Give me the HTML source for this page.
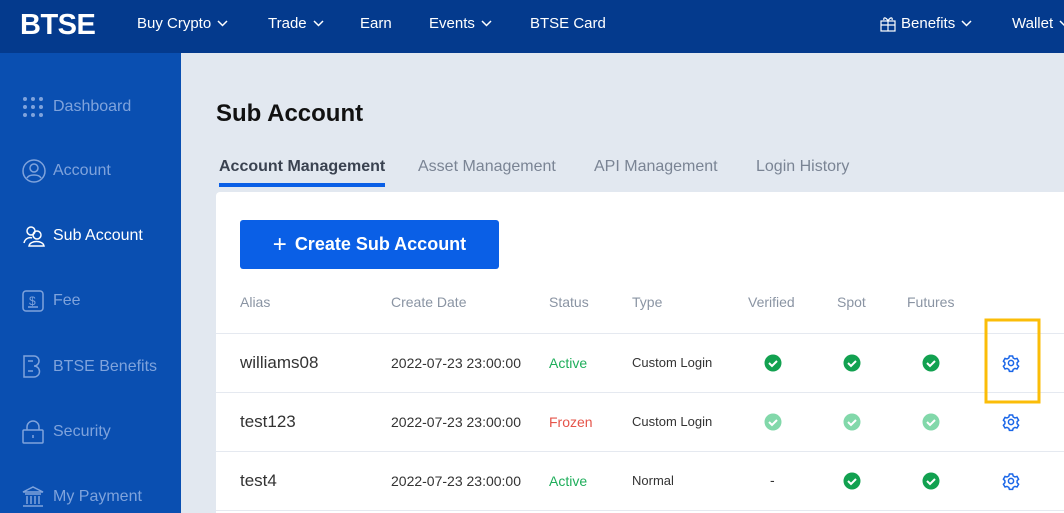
<!DOCTYPE html>
<html><head><meta charset="utf-8"><style>
*{margin:0;padding:0;box-sizing:border-box}
html,body{width:1064px;height:513px;overflow:hidden}
body{font-family:"Liberation Sans",sans-serif;background:#e2e8f0;position:relative}
.top{position:absolute;left:0;top:0;width:1064px;height:53px;background:#043a8d;color:#fff;overflow:hidden}
.top span{position:absolute;top:15px;font-size:15px;white-space:nowrap;display:flex;align-items:center}
.top span svg{margin-left:6px}
.logo{position:absolute;left:20px;top:9px;font-size:29px;font-weight:bold;letter-spacing:-0.5px;color:#fff}
.side{position:absolute;left:0;top:53px;width:181px;height:460px;background:#0a4fb1}
.si{position:absolute;left:22px;color:#7fa3dc;font-size:16px;display:flex;align-items:center;white-space:nowrap}
.si svg{margin-right:9px;flex:none}
.si.on{color:#fff}
h1{position:absolute;left:216px;top:100px;font-size:24px;color:#111;font-weight:bold}
.tab{position:absolute;top:158px;font-size:16px;color:#7a8494}
.card{position:absolute;left:216px;top:192px;width:848px;height:321px;background:#fff;border-radius:4px 0 0 0}
.btn{position:absolute;left:240px;top:220px;width:259px;height:49px;background:#0a5fe6;border-radius:3px;color:#fff;font-weight:bold;font-size:18px;display:flex;align-items:center;justify-content:center}
.th{position:absolute;top:294px;font-size:14px;color:#8a94a3}
.hr{position:absolute;left:216px;width:848px;height:1px;background:#e5e9f0}
.c{position:absolute;font-size:14px;color:#333}
</style></head><body>
<div class="top">
<div class="logo">BTSE</div>
<span style="left:137px">Buy Crypto<svg width="11" height="7"><path d="M1 1l4.5 4.5L10 1" stroke="#fff" stroke-width="1.5" fill="none"/></svg></span>
<span style="left:268px">Trade<svg width="11" height="7"><path d="M1 1l4.5 4.5L10 1" stroke="#fff" stroke-width="1.5" fill="none"/></svg></span>
<span style="left:360px">Earn</span>
<span style="left:429px">Events<svg width="11" height="7"><path d="M1 1l4.5 4.5L10 1" stroke="#fff" stroke-width="1.5" fill="none"/></svg></span>
<span style="left:530px">BTSE Card</span>
<span style="left:880px"><svg width="16" height="16" style="margin:0 5px 0 0" fill="none" stroke="#fff" stroke-width="1.2"><rect x="1" y="5" width="14" height="10"/><path d="M1 9h14M8 5v10M8 5C6 1 3 1 4 4M8 5c2-4 5-4 4-1"/></svg>Benefits<svg width="11" height="7"><path d="M1 1l4.5 4.5L10 1" stroke="#fff" stroke-width="1.5" fill="none"/></svg></span>
<span style="left:1012px">Wallet<svg width="11" height="7"><path d="M1 1l4.5 4.5L10 1" stroke="#fff" stroke-width="1.5" fill="none"/></svg></span>
</div>
<div class="side">
<div class="si" style="top:43px"><svg width="22" height="22"><g fill="#7fa3dc"><circle cx="3" cy="3" r="2"/><circle cx="11" cy="3" r="2"/><circle cx="19" cy="3" r="2"/><circle cx="3" cy="11" r="2"/><circle cx="11" cy="11" r="2"/><circle cx="19" cy="11" r="2"/><circle cx="3" cy="19" r="2"/><circle cx="11" cy="19" r="2"/><circle cx="19" cy="19" r="2"/></g></svg>Dashboard</div>
<div class="si" style="top:106px"><svg width="24" height="24" style="margin-right:7px" fill="none" stroke="#7fa3dc" stroke-width="1.5"><circle cx="12" cy="12" r="11"/><circle cx="12" cy="9" r="4"/><path d="M5 19c2-4 12-4 14 0"/></svg>Account</div>
<div class="si on" style="top:172px"><svg width="24" height="22" style="margin-right:7px" fill="none" stroke="#fff" stroke-width="1.5"><circle cx="9" cy="6" r="4"/><circle cx="15" cy="10" r="4"/><path d="M2 18c1-5 6-6 8-5M7 21c1-6 14-6 15 0z"/></svg>Sub Account</div>
<div class="si" style="top:237px"><svg width="22" height="22" fill="none" stroke="#7fa3dc" stroke-width="1.5"><rect x="1" y="1" width="20" height="20" rx="3"/><text x="7" y="15" font-size="12" fill="#7fa3dc" stroke="none">$</text><path d="M6 17h10"/></svg>Fee</div>
<div class="si" style="top:302px"><svg width="22" height="24" fill="none" stroke="#7fa3dc" stroke-width="1.5"><path d="M2 1h10a5 5 0 0 1 0 10a5 5 0 0 1 0 11H2z"/><path d="M6 6h5M6 16h5"/></svg>BTSE Benefits</div>
<div class="si" style="top:367px"><svg width="22" height="24" fill="none" stroke="#7fa3dc" stroke-width="1.5"><path d="M5 10V7a6 6 0 0 1 12 0v3"/><rect x="1" y="10" width="20" height="13" rx="1"/><path d="M11 15v3"/></svg>Security</div>
<div class="si" style="top:432px"><svg width="22" height="24" fill="none" stroke="#7fa3dc" stroke-width="1.5"><path d="M1 7l10-5 10 5zM3 9h16M5 11v8M9 11v8M13 11v8M17 11v8M1 21h20"/></svg>My Payment</div>
</div>
<h1>Sub Account</h1>
<div class="tab" style="left:219px;color:#3a4250;font-weight:bold">Account Management</div>
<div style="position:absolute;left:219px;top:183px;width:166px;height:4px;background:#0a5fe6"></div>
<div class="tab" style="left:418px">Asset Management</div>
<div class="tab" style="left:594px">API Management</div>
<div class="tab" style="left:756px">Login History</div>
<div class="card"></div>
<div class="btn"><span style="font-weight:normal;font-size:24px;margin-right:8px">+</span>Create Sub Account</div>
<div class="th" style="left:240px">Alias</div>
<div class="th" style="left:391px">Create Date</div>
<div class="th" style="left:549px">Status</div>
<div class="th" style="left:632px">Type</div>
<div class="th" style="left:748px">Verified</div>
<div class="th" style="left:837px">Spot</div>
<div class="th" style="left:907px">Futures</div>
<div class="hr" style="top:333px"></div>
<div class="hr" style="top:392px"></div>
<div class="hr" style="top:451px"></div>
<div class="hr" style="top:510px"></div>

<div class="c" style="left:240px;top:353px;font-size:17px">williams08</div>
<div class="c" style="left:391px;top:355px">2022-07-23 23:00:00</div>
<div class="c" style="left:549px;top:355px;color:#1fae5b">Active</div>
<div class="c" style="left:632px;top:355px;font-size:13px">Custom Login</div>

<div class="c" style="left:240px;top:412px;font-size:17px">test123</div>
<div class="c" style="left:391px;top:414px">2022-07-23 23:00:00</div>
<div class="c" style="left:549px;top:414px;color:#e5544a">Frozen</div>
<div class="c" style="left:632px;top:414px;font-size:13px">Custom Login</div>

<div class="c" style="left:240px;top:471px;font-size:17px">test4</div>
<div class="c" style="left:391px;top:473px">2022-07-23 23:00:00</div>
<div class="c" style="left:549px;top:473px;color:#1fae5b">Active</div>
<div class="c" style="left:632px;top:473px;font-size:13px">Normal</div>
<div class="c" style="left:770px;top:472px">-</div>

<svg width="1064" height="513" style="position:absolute;left:0;top:0">
<defs>
<g id="ck"><circle r="8.5"/><path d="M-4 0l3 3 5-5" stroke="#fff" stroke-width="2" fill="none"/></g>
<g id="gear" fill="none" stroke="#1a66e8" stroke-width="1.5"><circle r="2.6"/><path d="M-1.6-7h3.2l.6 2 1.8 1 2-.6 1.6 2.8-1.5 1.5v2l1.5 1.5-1.6 2.8-2-.6-1.8 1-.6 2h-3.2l-.6-2-1.8-1-2 .6-1.6-2.8 1.5-1.5v-2l-1.5-1.5 1.6-2.8 2 .6 1.8-1z"/></g>
</defs>
<g fill="#12a150"><use href="#ck" x="773" y="363"/><use href="#ck" x="852" y="363"/><use href="#ck" x="931" y="363"/><use href="#ck" x="852" y="481"/><use href="#ck" x="931" y="481"/></g>
<g fill="#82d8aa"><use href="#ck" x="773" y="422"/><use href="#ck" x="852" y="422"/><use href="#ck" x="931" y="422"/></g>
<use href="#gear" x="1011" y="363"/><use href="#gear" x="1011" y="422"/><use href="#gear" x="1011" y="481"/>
<rect x="986" y="320" width="53" height="82" fill="none" stroke="#fbbd08" stroke-width="3"/>
</svg>
</body></html>
